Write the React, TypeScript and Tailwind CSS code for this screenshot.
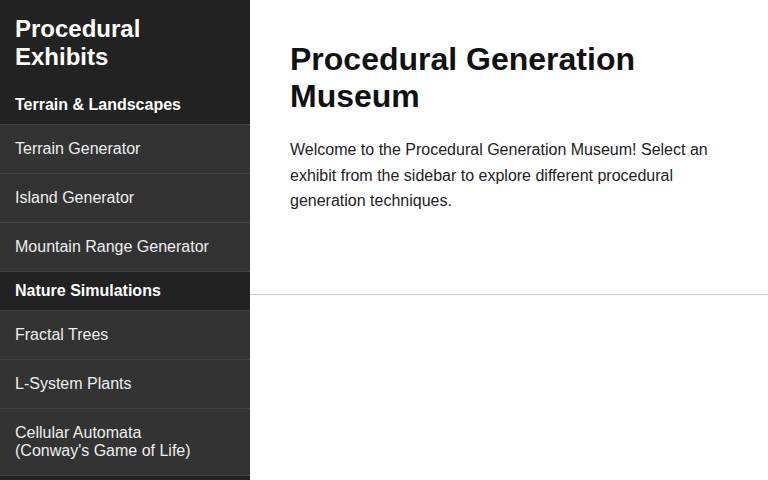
import React from 'react';

const groups = [
  {
    title: 'Terrain & Landscapes',
    items: ['Terrain Generator', 'Island Generator', 'Mountain Range Generator'],
  },
  {
    title: 'Nature Simulations',
    items: ['Fractal Trees', 'L-System Plants', 'Cellular Automata\n(Conway\'s Game of Life)'],
  },
];

export default function App() {
  return (
    <div className="flex h-[480px] w-[768px] overflow-hidden bg-white font-[family-name:Liberation_Sans,Arial,sans-serif]">
      {/* Sidebar */}
      <aside className="w-[250px] shrink-0 bg-[#222] text-white">
        <h2 className="px-[15px] pt-[15px] pb-[15px] text-[24px] font-bold leading-[28px]">
          Procedural Exhibits
        </h2>
        {groups.map((g, gi) => (
          <div key={g.title}>
            <div
              className={`bg-[#222] px-[15px] py-[10px] text-[16px] font-bold leading-[18px] ${
                gi > 0 ? 'border-t border-[#444]' : ''
              }`}
            >
              {g.title}
            </div>
            {g.items.map((item) => (
              <div
                key={item}
                className="whitespace-pre-line border-t border-[#444] bg-[#333] px-[15px] py-[15px] text-[16px] leading-[18px] text-[#eee]"
              >
                {item}
              </div>
            ))}
          </div>
        ))}
        <div className="border-t border-[#444]" />
      </aside>

      {/* Main */}
      <main className="flex-1">
        <section className="h-[295px] border-b border-[#ccc] px-[40px] pt-[41px]">
          <h1 className="mb-[22px] text-[32px] font-bold leading-[37px] text-[#111]">
            Procedural Generation Museum
          </h1>
          <p className="text-[16px] leading-[25.6px] text-[#222]">
            Welcome to the Procedural Generation Museum! Select an exhibit from the sidebar to explore
            different procedural generation techniques.
          </p>
        </section>
      </main>
    </div>
  );
}
